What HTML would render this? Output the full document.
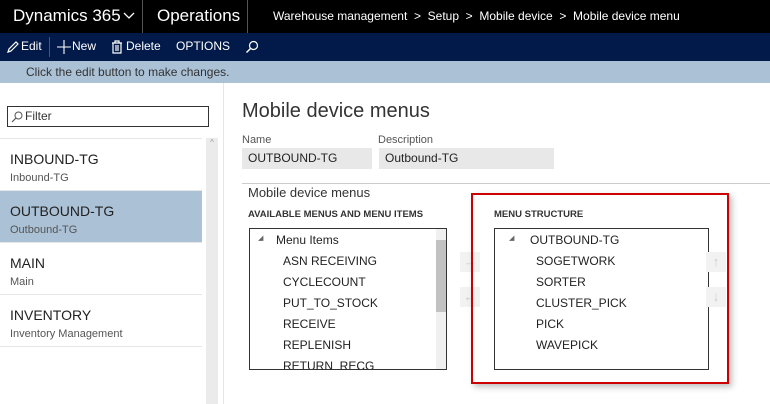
<!DOCTYPE html>
<html><head><style>
*{margin:0;padding:0;box-sizing:border-box}
body{width:770px;height:404px;overflow:hidden;background:#fff;font-family:"Segoe UI","Liberation Sans",sans-serif;position:relative;color:#222}
.a{position:absolute;white-space:nowrap}
.top{left:0;top:0;width:770px;height:33px;background:#000;color:#fff}
.tb{left:0;top:33px;width:770px;height:28px;background:#021a4a;color:#fff}
.info{left:0;top:61px;width:770px;height:22px;background:#abc1d6;font-size:12px;color:#333}
.li{left:0;width:202px;height:52px;border-bottom:1px solid #e6e6e6}
.li .t{position:absolute;left:10px;top:12px;font-size:14px;color:#222}
.li .s{position:absolute;left:10px;top:33px;font-size:11px;color:#555}
.box{border:1px solid #333;background:#fff}
.row{position:absolute;font-size:12px;color:#222}
.btn{background:#f2f2f2;width:20px;height:20px;color:#ccc;font-size:13px;text-align:center;line-height:20px}
</style></head><body>
<div class="a top">
 <div class="a" style="left:13px;top:6px;font-size:17px">Dynamics 365</div>
 <svg class="a" style="left:123px;top:12px" width="12" height="8" viewBox="0 0 12 8"><path d="M1 1L6 6L11 1" fill="none" stroke="#fff" stroke-width="1.3"/></svg>
 <div class="a" style="left:142px;top:0;width:1px;height:33px;background:#555"></div>
 <div class="a" style="left:157px;top:6px;font-size:17px">Operations</div>
 <div class="a" style="left:247px;top:0;width:1px;height:33px;background:#555"></div>
 <div class="a" style="left:273px;top:9px;font-size:12px">Warehouse management &nbsp;&gt;&nbsp; Setup &nbsp;&gt;&nbsp; Mobile device &nbsp;&gt;&nbsp; Mobile device menu</div>
</div>
<div class="a tb">
 <svg class="a" style="left:6px;top:7px" width="14" height="14" viewBox="0 0 14 14"><path d="M2 12 L3 9 L10 2 L12 4 L5 11 Z M2 12 L5 11" fill="none" stroke="#fff" stroke-width="1.2"/></svg>
 <div class="a" style="left:21px;top:6px;font-size:12px">Edit</div>
 <div class="a" style="left:49px;top:4px;width:1px;height:20px;background:#556"></div>
 <svg class="a" style="left:57px;top:7px" width="14" height="14" viewBox="0 0 14 14"><path d="M7 0V14M0 7H14" stroke="#fff" stroke-width="1.1"/></svg>
 <div class="a" style="left:72px;top:6px;font-size:12px">New</div>
 <svg class="a" style="left:111px;top:7px" width="12" height="14" viewBox="0 0 12 14"><path d="M1 3H11M4 3V1H8V3M2 3V13H10V3M5 5V11M7 5V11" fill="none" stroke="#fff" stroke-width="1.2"/></svg>
 <div class="a" style="left:126px;top:6px;font-size:12px">Delete</div>
 <div class="a" style="left:176px;top:6px;font-size:12px">OPTIONS</div>
 <svg class="a" style="left:245px;top:7px" width="14" height="14" viewBox="0 0 14 14"><circle cx="8.5" cy="5.5" r="4" fill="none" stroke="#fff" stroke-width="1.2"/><path d="M5.5 8.5L1.5 12.5" stroke="#fff" stroke-width="1.4"/></svg>
</div>
<div class="a info"><div class="a" style="left:26px;top:4px">Click the edit button to make changes.</div></div>
<div class="a box" style="left:7px;top:106px;width:202px;height:21px">
 <svg class="a" style="left:3px;top:4px" width="12" height="12" viewBox="0 0 12 12"><circle cx="7.5" cy="4.5" r="3.5" fill="none" stroke="#555" stroke-width="1"/><path d="M5 7L1 11" stroke="#555" stroke-width="1.2"/></svg>
 <span class="a" style="left:17px;top:2px;font-size:12px;color:#333">Filter</span></div>
<div class="a" style="left:0;top:138px;width:202px;height:1px;background:#e6e6e6"></div>
<div class="a li" style="top:139px"><div class="t">INBOUND-TG</div><div class="s">Inbound-TG</div></div>
<div class="a li" style="top:191px;background:#abc1d6"><div class="t">OUTBOUND-TG</div><div class="s">Outbound-TG</div></div>
<div class="a li" style="top:243px"><div class="t">MAIN</div><div class="s">Main</div></div>
<div class="a li" style="top:295px"><div class="t">INVENTORY</div><div class="s">Inventory Management</div></div>
<div class="a" style="left:206px;top:138px;width:12px;height:266px;background:#ebebeb;font-size:8px;color:#999;text-align:center">^</div>
<div class="a" style="left:223px;top:83px;width:1px;height:321px;background:#e6e6e6"></div>
<div class="a" style="left:242px;top:100px;font-size:20px;font-weight:300;color:#333">Mobile device menus</div>
<div class="a" style="left:242px;top:134px;font-size:11px;color:#555">Name</div>
<div class="a" style="left:242px;top:148px;width:130px;height:21px;background:#e8e8e8;font-size:12px;padding:3px 6px">OUTBOUND-TG</div>
<div class="a" style="left:378px;top:134px;font-size:11px;color:#555">Description</div>
<div class="a" style="left:379px;top:148px;width:175px;height:21px;background:#e8e8e8;font-size:12px;padding:3px 6px">Outbound-TG</div>
<div class="a" style="left:242px;top:183px;width:528px;height:1px;background:#ccc"></div>
<div class="a" style="left:248px;top:185px;font-size:13px;color:#333">Mobile device menus</div>
<div class="a" style="left:248px;top:209px;font-size:9.5px;font-weight:bold;color:#333">AVAILABLE MENUS AND MENU ITEMS</div>
<div class="a box" style="left:249px;top:228px;width:198px;height:142px;overflow:hidden">
 <div class="row" style="left:8px;top:5px;font-size:7px;color:#666">&#9698;</div>
 <div class="row" style="left:26px;top:4px">Menu Items</div>
 <div class="row" style="left:33px;top:25px">ASN RECEIVING</div>
 <div class="row" style="left:33px;top:46px">CYCLECOUNT</div>
 <div class="row" style="left:33px;top:67px">PUT_TO_STOCK</div>
 <div class="row" style="left:33px;top:88px">RECEIVE</div>
 <div class="row" style="left:33px;top:109px">REPLENISH</div>
 <div class="row" style="left:33px;top:130px">RETURN_RECG</div>
 <div class="a" style="left:186px;top:0;width:11px;height:140px;background:#f0f0f0"></div>
 <div class="a" style="left:186px;top:11px;width:11px;height:72px;background:#c2c2c2"></div>
</div>
<div class="a btn" style="left:460px;top:252px">&rarr;</div>
<div class="a btn" style="left:460px;top:287px">&larr;</div>
<div class="a" style="left:471px;top:193px;width:258px;height:191px;border:2px solid #c00;box-shadow:3px 3px 6px rgba(0,0,0,.25)"></div>
<div class="a" style="left:494px;top:209px;font-size:9.5px;font-weight:bold;color:#333">MENU STRUCTURE</div>
<div class="a box" style="left:494px;top:228px;width:215px;height:142px">
 <div class="row" style="left:14px;top:5px;font-size:7px;color:#666">&#9698;</div>
 <div class="row" style="left:35px;top:4px">OUTBOUND-TG</div>
 <div class="row" style="left:41px;top:25px">SOGETWORK</div>
 <div class="row" style="left:41px;top:46px">SORTER</div>
 <div class="row" style="left:41px;top:67px">CLUSTER_PICK</div>
 <div class="row" style="left:41px;top:88px">PICK</div>
 <div class="row" style="left:41px;top:109px">WAVEPICK</div>
</div>
<div class="a btn" style="left:706px;top:252px">&uarr;</div>
<div class="a btn" style="left:706px;top:287px">&darr;</div>
</body></html>
